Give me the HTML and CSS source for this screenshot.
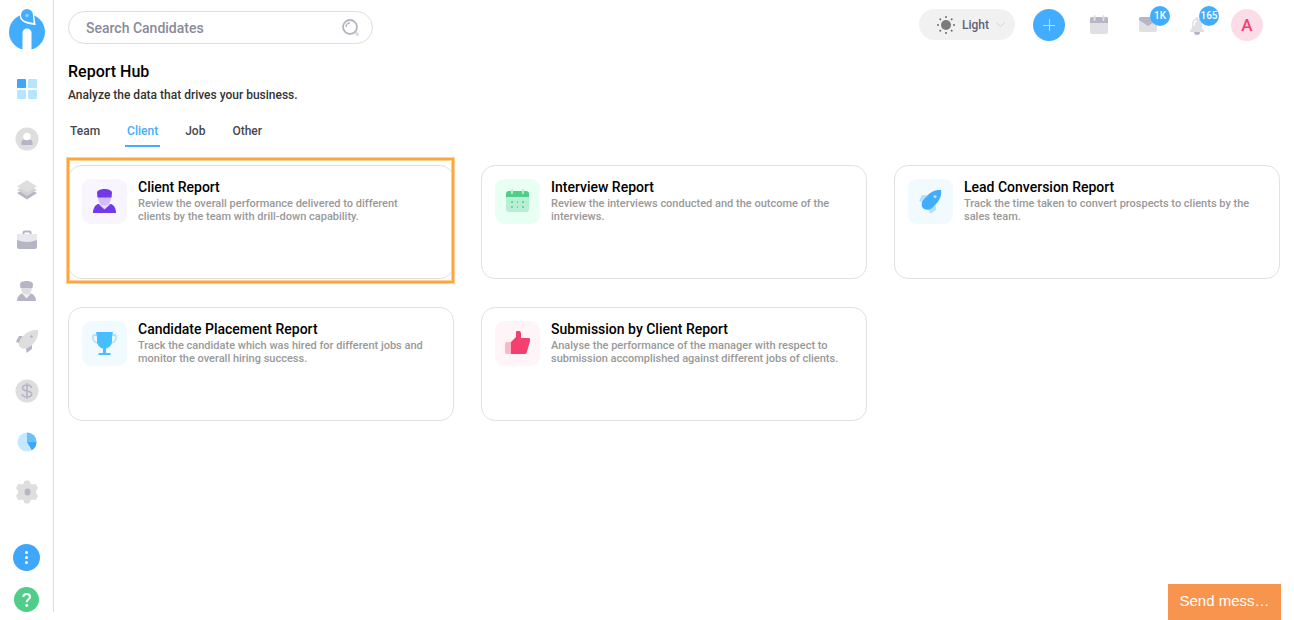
FILE: index.html
```html
<!DOCTYPE html>
<html lang="en">

<head>
  <meta charset="UTF-8">
  <meta name="viewport" content="width=device-width, initial-scale=1.0">
  <title>Report Hub</title>
  <link rel="stylesheet" href="styles.css">
</head>

<body>
  <aside class="sidebar">
    <a class="logo" href="#">
      <svg width="36" height="42" viewBox="0 0 36 42">
        <circle cx="18" cy="23" r="18" fill="#42adff"/>
        <path d="M13.500 43V24a4.500 4.500 0 0 1 9 0v19z" fill="#fff"/>
        <path d="M18 1a5.500 5.500 0 0 1 5.500 5.500l1 7.500C19 13 12.500 12 12.500 6.500A5.500 5.500 0 0 1 18 1z" fill="#42adff" stroke="#fff" stroke-width="3.500"/>
        <path d="M18 0a6 6 0 0 1 6 6l.5 8C19 13 12 12 12 6a6 6 0 0 1 6-6z" fill="#42adff"/>
        <circle cx="18" cy="6.500" r="1.800" fill="#8fcfff"/>
      </svg>
    </a>
    <nav class="side-nav">
      <a href="#">
        <svg width="24" height="24" viewBox="0 0 24 24">
          <rect x="2" y="2" width="9" height="9" rx="1" fill="#3ea6fb"/>
          <g fill="#b5e5ff"><rect x="13" y="2" width="9" height="9" rx="1"/><rect x="2" y="13" width="9" height="9" rx="1"/><rect x="13" y="13" width="9" height="9" rx="1"/></g>
        </svg>
      </a>
      <a href="#">
        <svg width="24" height="24" viewBox="0 0 24 24">
          <circle cx="12" cy="12" r="11.500" fill="#dedede"/>
          <path d="M6.500 18v-2.500a3 3 0 0 1 3-3h5a3 3 0 0 1 3 3V18z" fill="#b5b5c6"/>
          <circle cx="12" cy="9.500" r="3.800" fill="#fff"/>
        </svg>
      </a>
      <a href="#">
        <svg width="24" height="24" viewBox="0 0 24 24">
          <path d="M2 15l10-5 10 5-10 6.500z" fill="#b5b5c6"/>
          <path d="M2 12l10-5 10 5-10 6z" fill="#d2d2d4"/>
          <path d="M2 8.500L12 2l10 6.500-10 6z" fill="#dedede"/>
        </svg>
      </a>
      <a href="#">
        <svg width="24" height="24" viewBox="0 0 24 24">
          <path d="M8.500 7V4.500a1 1 0 0 1 1-1h5a1 1 0 0 1 1 1V7" fill="none" stroke="#b5b5c6" stroke-width="2"/>
          <rect x="2" y="6" width="20" height="15" rx="2" fill="#b5b5c6"/>
          <path d="M2 12V8a2 2 0 0 1 2-2h16a2 2 0 0 1 2 2v4q-10 4-20 0z" fill="#e8e8ee"/>
        </svg>
      </a>
      <a href="#">
        <svg width="24" height="24" viewBox="0 0 24 24">
          <path d="M2 22c0-4 2-6.500 5-7.500h9c3 1 5 3.500 5 7.500z" fill="#b5b5c6"/>
          <path d="M7 14.500h9l-4.500 5z" fill="#eeeef3"/>
          <path d="M6 8h11c0 4-2 7.500-5.500 7.500S6 12 6 8z" fill="#dedede"/>
          <path d="M5.500 9L5 5.500C5 3 8 2 11.500 2S18 3 18 5.500L17.500 9z" fill="#b5b5c6"/>
        </svg>
      </a>
      <a href="#">
        <svg width="24" height="24" viewBox="0 0 24 24">
          <path d="M7.500 7H4l-3 5.500L5 15zM17 15.500V20l-5.500 4-.5-4.500z" fill="#b5b5c6"/>
          <path d="M23 1c.8 6-2 12.500-8 16.500-3 2.500-5.500 2.700-8 2L4 17c-.5-3 0-5 2-7.500C10.500 3 17 .5 23 1z" fill="#dedede"/>
          <path d="M16.500 6v3M15 7.500h3" stroke="#b5b5c6" stroke-width="1.200"/>
        </svg>
      </a>
      <a href="#">
        <svg width="24" height="24" viewBox="0 0 24 24">
          <circle cx="12" cy="12" r="11.500" fill="#dedede"/>
          <path d="M12 4v16M16.500 9c0-2-1.500-3-4.500-3S7.500 7.200 7.500 9s1.500 2.500 4.500 3 4.700 1.200 4.700 3-1.700 3-4.700 3-4.700-1-4.700-3" fill="none" stroke="#b5b5c6" stroke-width="1.600"/>
        </svg>
      </a>
      <a href="#">
        <svg width="24" height="24" viewBox="0 0 24 24">
          <circle cx="12" cy="12" r="9.500" fill="#c4e8ff"/>
          <path d="M12 12V2.500A9.500 9.500 0 0 1 21.500 12z" fill="#68c0fc"/>
          <path d="M12 12h9.500a9.500 9.500 0 0 1-4.700 8.200z" fill="#3ea6fb"/>
        </svg>
      </a>
      <a href="#">
        <svg width="24" height="24" viewBox="0 0 24 24">
          <path d="M10 1h4l1 3 2 1 3.500-.5 2 3.500-2 3v2l2 3-2 3.500L17 19l-2 1-1 3h-4l-1-3-2-1-3.500.5-2-3.500 2-3v-2l-2-3 2-3.500L7 5l2-1z" fill="#dedede" stroke="#dedede" stroke-linejoin="round"/>
          <ellipse cx="12.500" cy="12" rx="3" ry="3.500" fill="#b5b5c6"/>
        </svg>
      </a>
    </nav>
    <div class="side-footer">
      <button class="more-btn" type="button" aria-label="More">
        <svg width="27" height="27" viewBox="0 0 27 27" fill="#fff"><circle cx="13.500" cy="8.500" r="1.500"/><circle cx="13.500" cy="13.500" r="1.500"/><circle cx="13.500" cy="18.500" r="1.500"/></svg>
      </button>
      <button class="help-btn" type="button" aria-label="Help">
        <svg width="25" height="25" viewBox="0 0 25 25"><path d="M9.300 10c0-2 1.300-3 3.400-3s3.300 1.200 3.300 2.900c0 2.300-3.300 2.500-3.300 5.300" fill="none" stroke="#fff" stroke-width="2"/><circle cx="12.700" cy="18.500" r="1.400" fill="#fff"/></svg>
      </button>
    </div>
  </aside>

  <div class="page">
    <header class="topbar">
      <form class="search">
        <input type="text" placeholder="Search Candidates" aria-label="Search Candidates">
        <svg width="18" height="18" viewBox="0 0 18 18" fill="none">
          <path d="M13 13l3.500 3.500" stroke="#dcdce2" stroke-width="3"/>
          <circle cx="8" cy="8" r="7" stroke="#b5b5c6" stroke-width="1.800"/>
          <path d="M4 8a4 4 0 0 1 4-4" stroke="#b5b5c6" stroke-width="1.500"/>
        </svg>
      </form>

      <div class="actions">
        <label class="theme">
          <svg width="18" height="18" viewBox="0 0 18 18">
            <circle cx="9" cy="9" r="5" fill="#7b7b7b"/>
            <path d="M9 0v2M9 16v2M0 9h2M16 9h2M2.600 2.600L4 4M14 14l1.400 1.400M2.600 15.400L4 14M14 4l1.400-1.400" stroke="#6b6b6b" stroke-width="1.500"/>
          </svg>
          <select aria-label="Theme">
            <option>Light</option>
          </select>
          <svg width="9" height="6" viewBox="0 0 9 6"><path d="M.5.500l4 4 4-4" fill="none" stroke="#d3d3d8"/></svg>
        </label>
        <button class="add-btn" type="button" aria-label="Add">
          <svg width="14" height="14" viewBox="0 0 14 14"><path d="M7.500 1v12M1 7.500h12" stroke="#b5e0ff"/></svg>
        </button>
        <button class="icon-btn" type="button" aria-label="Calendar">
          <svg width="20" height="20" viewBox="0 0 20 20">
            <rect x="1" y="3" width="18" height="16" rx="2" fill="#e0dfe3"/>
            <path d="M1 8V4a2 2 0 0 1 2-2h14a2 2 0 0 1 2 2v4z" fill="#b5b5c6"/>
            <path d="M5.500 1v4M14.500 1v4" stroke="#e0dfe3" stroke-width="2" stroke-linecap="round"/>
          </svg>
        </button>
        <button class="icon-btn" type="button" aria-label="Messages">
          <svg width="20" height="20" viewBox="0 0 20 20">
            <rect x="1" y="2" width="18" height="15" rx="2" fill="#e0dfe3"/>
            <path d="M1 5V4a2 2 0 0 1 2-2h14a2 2 0 0 1 2 2v1l-9 6z" fill="#b5b5c6"/>
          </svg>
          <span class="badge">1K</span>
        </button>
        <button class="icon-btn" type="button" aria-label="Notifications">
          <svg width="20" height="20" viewBox="0 0 20 20">
            <path d="M7 17h6a3 3 0 0 1-6 0z" fill="#b5b5c6"/>
            <path d="M9 3.500V2h2v1.500c2.500.5 4 2.500 4 5V13l2 2.500V17H3v-1.500L5 13V8.500c0-2.500 1.500-4.500 4-5z" fill="#e0dfe3"/>
            <path d="M7 11V9a3 3 0 0 1 3-3" fill="none" stroke="#fff" stroke-width="1.300"/>
          </svg>
          <span class="badge">165</span>
        </button>
        <button class="avatar" type="button">A</button>
      </div>
    </header>

    <main class="content">
      <h1>Report Hub</h1>
      <p class="subtitle">Analyze the data that drives your business.</p>

      <nav class="tabs">
        <a href="#">Team</a>
        <a href="#" class="active">Client</a>
        <a href="#">Job</a>
        <a href="#">Other</a>
      </nav>

      <div class="reports">
        <a class="card selected" href="#">
          <span class="card-icon purple">
            <svg width="25" height="25" viewBox="0 0 25 25">
              <path d="M1 24c0-4.500 2-8 5-9h13c3 1 5 4.500 5 9z" fill="#7239ea"/>
              <path d="M8 14h9l1 1.500-5.500 5L7 15.500z" fill="#e6dbfc"/>
              <path d="M6 8h13c0 5-2.500 8.500-6.500 8.500S6 13 6 8z" fill="#d2bdf8"/>
              <path d="M5.500 8.500L5 4c0-3 4-4 7.500-4S20 1 20 4l-.5 4.500z" fill="#7239ea"/>
            </svg>
          </span>
          <div class="card-text">
            <h2>Client Report</h2>
            <p>Review the overall performance delivered to different clients by the team with drill-down capability.</p>
          </div>
        </a>
        <a class="card" href="#">
          <span class="card-icon green">
            <svg width="25" height="25" viewBox="0 0 25 25">
              <rect x="1" y="3" width="23" height="20" rx="3" fill="#b8eed3"/>
              <path d="M1 8V5a3 3 0 0 1 3-3h17a3 3 0 0 1 3 3v3z" fill="#50cd89"/>
              <path d="M7 1v3M18 1v3" stroke="#b8eed3" stroke-width="2" stroke-linecap="round"/>
              <path d="M6 13h2M12 13h1M17 13h2M6 18h2M12 18h1M17 18h2" stroke="#50cd89" stroke-width="1.500"/>
            </svg>
          </span>
          <div class="card-text">
            <h2>Interview Report</h2>
            <p>Review the interviews conducted and the outcome of the interviews.</p>
          </div>
        </a>
        <a class="card" href="#">
          <span class="card-icon blue">
            <svg width="25" height="25" viewBox="0 0 25 25">
              <path d="M9 6H4l-3 6 5 2zM18 16v5l-6 4-1-5z" fill="#aee3ff"/>
              <path d="M23 1c1 6-2 12-8 17-3 3-6 3.500-9 2l-2-2c-1-3 0-6 3-9C12 3 17 .5 23 1z" fill="#42adff"/>
              <circle cx="17" cy="7.500" r="1.600" fill="#aee3ff"/>
            </svg>
          </span>
          <div class="card-text">
            <h2>Lead Conversion Report</h2>
            <p>Track the time taken to convert prospects to clients by the sales team.</p>
          </div>
        </a>
        <a class="card" href="#">
          <span class="card-icon blue">
            <svg width="25" height="25" viewBox="0 0 25 25">
              <path d="M6 4H3C1 4 .8 5 1 7c.3 3 2 4.500 5 5M19 4h3c2 0 2.200 1 2 3-.3 3-2 4.500-5 5" fill="none" stroke="#aee3ff" stroke-width="1.800"/>
              <path d="M4 1h17c-1 3-1 6-1 9 0 4-3 7-6 7.500V22h4.500v2h-12v-2H11v-4.500C8 17 5 14 5 10c0-3 0-6-1-9z" fill="#47beff"/>
            </svg>
          </span>
          <div class="card-text">
            <h2>Candidate Placement Report</h2>
            <p>Track the candidate which was hired for different jobs and monitor the overall hiring success.</p>
          </div>
        </a>
        <a class="card" href="#">
          <span class="card-icon red">
            <svg width="25" height="25" viewBox="0 0 25 25">
              <rect x="0" y="11" width="9" height="12" rx="2" fill="#fbb8cb"/>
              <path d="M6 11l5-5V1.500C11 0 12-.5 13-.5c2 0 3 1.500 3 3V7h7c2 0 2.500 1 2 3l-3 10.500c-.5 2-1 2.500-3 2.500H6z" fill="#f4406e"/>
            </svg>
          </span>
          <div class="card-text">
            <h2>Submission by Client Report</h2>
            <p>Analyse the performance of the manager with respect to submission accomplished against different jobs of clients.</p>
          </div>
        </a>
      </div>
    </main>
  </div>

  <button class="chat-btn" type="button">Send mess…</button>
</body>

</html>
```
FILE: styles.css
```css
* {
  box-sizing: border-box;
}

body {
  margin: 0;
  display: flex;
  min-height: 100vh;
  background-color: #fff;
  font-family: Roboto, "Liberation Sans", sans-serif;
  font-weight: 500;
}

a {
  color: inherit;
  text-decoration: none;
}

button {
  border: none;
  padding: 0;
  background: none;
  font-family: inherit;
  font-weight: inherit;
  cursor: pointer;
}

svg {
  display: block;
  flex-shrink: 0;
}

/* Sidebar */
.sidebar {
  flex-shrink: 0;
  width: 54px;
  height: calc(100vh - 8px);
  padding-top: 9px;
  border-right: 1px solid #dedede;
  display: flex;
  flex-direction: column;
  align-items: center;
}

.side-nav {
  flex: 1;
  margin-top: 26px;
  display: flex;
  flex-direction: column;
  justify-content: space-between;
}

.side-footer {
  margin-top: 40px;
  display: flex;
  flex-direction: column;
  align-items: center;
  gap: 16px;
}

.more-btn,
.help-btn {
  border-radius: 50%;
}

.more-btn {
  background-color: #3ea6fb;
}

.help-btn {
  background-color: #50cd89;
}

/* Top bar */
.page {
  flex: 1;
  min-width: 0;
  padding: 0 14px;
}

.topbar {
  display: flex;
  justify-content: space-between;
  align-items: flex-start;
}

.search {
  display: flex;
  align-items: center;
  width: 305px;
  height: 33px;
  margin-top: 11px;
  padding: 0 12px 0 17px;
  border: 1px solid #dedede;
  border-radius: 17px;
}

.search input {
  flex: 1;
  min-width: 0;
  border: none;
  outline: none;
  padding: 0;
  background: none;
  font-family: inherit;
  font-size: 14px;
  font-weight: 500;
}

.search input::placeholder {
  color: #8a8a99;
}

.actions {
  display: flex;
  align-items: center;
  margin-top: 9px;
  padding-right: 17px;
}

.theme {
  display: flex;
  align-items: center;
  align-self: flex-start;
  width: 96px;
  height: 31px;
  margin-right: 18px;
  padding: 0 10px 0 18px;
  border-radius: 16px;
  background-color: #f1f1f1;
}

.theme select {
  flex: 1;
  min-width: 0;
  appearance: none;
  border: none;
  outline: none;
  padding: 0 0 0 7px;
  background: none;
  color: #5e6278;
  font-family: inherit;
  font-size: 12px;
  font-weight: 500;
}

.add-btn,
.avatar {
  display: flex;
  align-items: center;
  justify-content: center;
  width: 32px;
  height: 32px;
  border-radius: 50%;
}

.add-btn {
  margin-right: 24px;
  background-color: #42adff;
}

.icon-btn {
  position: relative;
  margin-right: 29px;
}

.icon-btn + .avatar {
  margin-left: -5px;
}

.badge {
  position: absolute;
  left: 12px;
  top: -9px;
  min-width: 20px;
  height: 20px;
  border-radius: 10px;
  background-color: #42adff;
  color: #fff;
  font-size: 10px;
  line-height: 20px;
  text-align: center;
}

.avatar {
  background-color: #fcdde7;
  color: #f4406e;
  font-size: 17px;
}

/* Report hub */
.content {
  padding-top: 18px;
}

.content h1 {
  margin: 0;
  color: #000;
  font-size: 16px;
  font-weight: 500;
  line-height: 20px;
}

.subtitle {
  margin: 5px 0 0;
  color: #333;
  font-size: 12px;
  line-height: 16px;
}

.tabs {
  display: flex;
  gap: 23px;
  margin-top: 17px;
}

.tabs a {
  padding: 3px 2px 6px;
  border-bottom: 2px solid transparent;
  color: #464852;
  font-size: 12px;
  line-height: 16px;
}

.tabs .active {
  border-bottom-color: #42adff;
  color: #42adff;
}

.reports {
  display: grid;
  grid-template-columns: repeat(3, 1fr);
  gap: 28px 27px;
  margin-top: 18px;
}

.card {
  position: relative;
  display: flex;
  align-items: flex-start;
  gap: 11px;
  min-height: 114px;
  padding: 13px 20px 13px 13px;
  border: 1px solid #e1e1e1;
  border-radius: 14px;
}

.selected::after {
  content: "";
  position: absolute;
  top: -8px;
  right: -1px;
  bottom: -5px;
  left: -2px;
  border: 2px solid #ffa53b;
  box-shadow: 0 0 0 1px #ffcf94, inset 0 0 0 1px #ffcf94;
}

.card-icon {
  flex-shrink: 0;
  display: flex;
  align-items: center;
  justify-content: center;
  width: 45px;
  height: 45px;
  border-radius: 9px;
}

.purple {
  background-color: #f8f5ff;
}

.green {
  background-color: #e8fff3;
}

.blue {
  background-color: #f1faff;
}

.red {
  background-color: #fff5f8;
}

.card-text {
  min-width: 0;
}

.card h2 {
  margin: 0;
  color: #000;
  font-size: 14px;
  font-weight: 500;
  line-height: 16px;
}

.card p {
  margin: 2px 0 0;
  color: #999;
  font-size: 11px;
  line-height: 13px;
}

/* Chat launcher */
.chat-btn {
  position: fixed;
  right: 13px;
  bottom: 0;
  width: 113px;
  height: 36px;
  padding-bottom: 3px;
  background-color: #f7954e;
  color: #fff;
  font-family: "Liberation Sans", Arial, sans-serif;
  font-size: 15px;
  font-weight: 400;
}
```
